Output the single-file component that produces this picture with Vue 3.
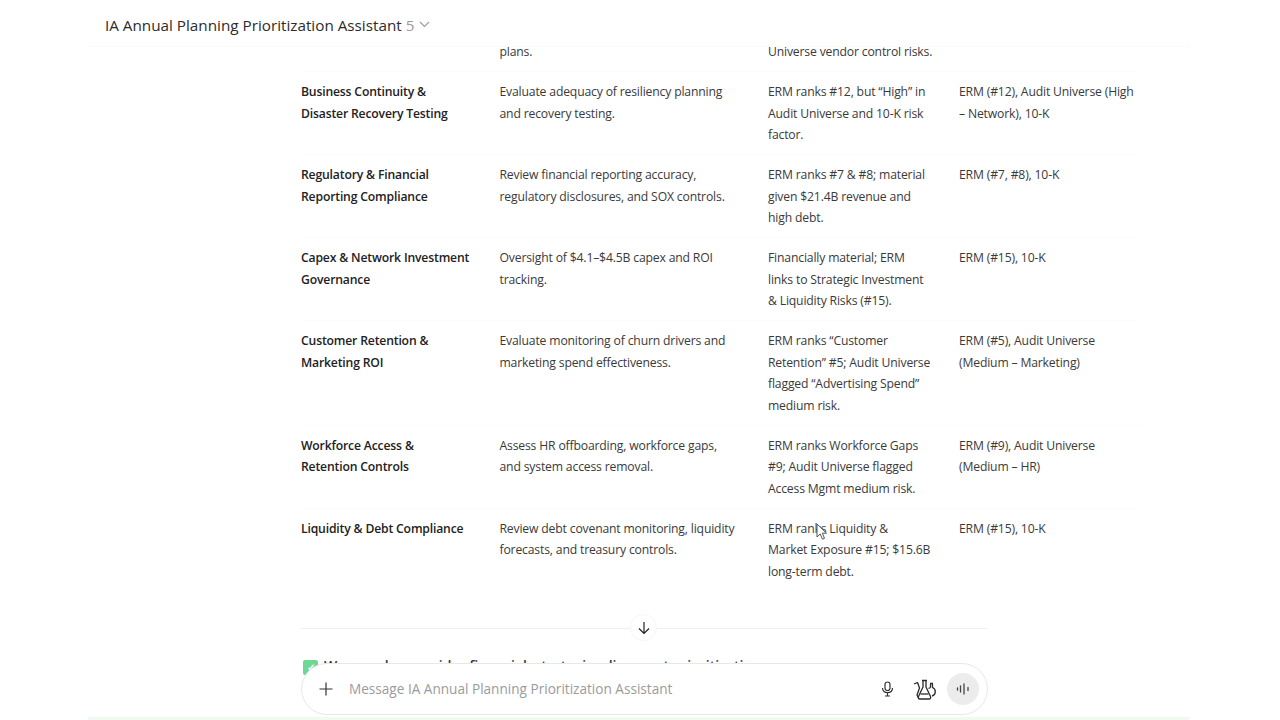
<template>
  <div class="page">
    <header class="topbar">
      <span class="title">IA Annual Planning Prioritization Assistant</span>
      <span class="version">5</span>
      <svg class="chevron" width="11" height="7" viewBox="0 0 11 7" fill="none">
        <path d="M1 1l4.5 4.500L10 1" stroke="#9a9a9a" stroke-width="1.1" />
      </svg>
    </header>

    <main class="thread">
      <table class="risk-table">
        <tbody>
          <tr v-for="row in rows" :key="row.name">
            <td class="name">{{ row.name }}</td>
            <td>{{ row.scope }}</td>
            <td>{{ row.why }}</td>
            <td>{{ row.source }}</td>
          </tr>
        </tbody>
      </table>

      <div class="rule"></div>
      <p class="next-line"><span class="check">✓</span>We can also consider financial, strategic, alignment prioritization</p>
    </main>

    <button class="scroll-down" type="button">
      <svg width="14" height="14" viewBox="0 0 14 14" fill="none">
        <path d="M7 1v11.500M2 7.500l5 5 5-5" stroke="#222" stroke-width="1.2" />
      </svg>
    </button>

    <!-- mouse cursor caught in the recording -->
    <svg class="cursor" width="12" height="18" viewBox="0 0 12 18">
      <path d="M1 1v13l3.200-3 2.300 5.200 2-.9-2.200-5.100H10.500z" fill="#fff" stroke="#555" stroke-width="1" />
    </svg>

    <div class="composer">
      <svg class="plus" width="14" height="14" viewBox="0 0 14 14" fill="none">
        <path d="M7 .5v13M.5 7h13" stroke="#333" stroke-width="1.2" />
      </svg>
      <span class="placeholder">Message IA Annual Planning Prioritization Assistant</span>
      <svg class="mic" width="13" height="16" viewBox="0 0 13 16" fill="none" stroke="#333" stroke-width="1.2">
        <rect x="4" y="1" width="5" height="8.500" rx="2.500" />
        <path d="M1.500 7c0 2.900 2.200 4.700 5 4.700s5-1.800 5-4.700M6.500 11.700V15M4 15h5" />
      </svg>
      <svg class="flasks" width="24" height="21" viewBox="0 0 24 21" fill="none" stroke="#2b2b2b" stroke-width="1.3" stroke-linejoin="round">
        <path d="M1 5l3.500-1.500L6.500 9 4 16l2 4" />
        <path d="M9 1.500h5M10 2v6L5.500 17.500C5 19 5.700 20 7 20h9c1.300 0 2-1 1.500-2.500L13 8V2" />
        <path d="M7.500 15h8" />
        <path d="M17 4.500h3M17.500 5v3.500M19.500 5v3.500a4.500 4.500 0 0 1-.5 8.500M17.500 8.500l-2 1" />
      </svg>
      <span class="voice">
        <svg width="14" height="12" viewBox="0 0 14 12" fill="none" stroke="#444" stroke-width="1.300" stroke-linecap="round">
          <path d="M1.500 5v2M4.500 3v6M8 1v10M12 4.500v3" />
        </svg>
      </span>
    </div>
    <div class="bottom-strip"></div>
  </div>
</template>

<script setup>
const rows = [
  { name: '', scope: 'plans.', why: 'Universe vendor control risks.', source: '' },
  {
    name: 'Business Continuity & Disaster Recovery Testing',
    scope: 'Evaluate adequacy of resiliency planning and recovery testing.',
    why: 'ERM ranks #12, but “High” in Audit Universe and 10-K risk factor.',
    source: 'ERM (#12), Audit Universe (High – Network), 10-K',
  },
  {
    name: 'Regulatory & Financial Reporting Compliance',
    scope: 'Review financial reporting accuracy, regulatory disclosures, and SOX controls.',
    why: 'ERM ranks #7 & #8; material given $21.4B revenue and high debt.',
    source: 'ERM (#7, #8), 10-K',
  },
  {
    name: 'Capex & Network Investment Governance',
    scope: 'Oversight of $4.1–$4.5B capex and ROI tracking.',
    why: 'Financially material; ERM links\u00a0to Strategic Investment & Liquidity Risks (#15).',
    source: 'ERM (#15), 10-K',
  },
  {
    name: 'Customer Retention & Marketing ROI',
    scope: 'Evaluate monitoring of churn drivers and marketing spend effectiveness.',
    why: 'ERM ranks “Customer Retention” #5; Audit Universe flagged “Advertising Spend” medium risk.',
    source: 'ERM (#5), Audit Universe (Medium – Marketing)',
  },
  {
    name: 'Workforce Access & Retention\u00a0Controls',
    scope: 'Assess HR offboarding, workforce gaps, and system access removal.',
    why: 'ERM ranks Workforce Gaps #9; Audit Universe flagged Access Mgmt medium risk.',
    source: 'ERM (#9), Audit Universe (Medium – HR)',
  },
  {
    name: 'Liquidity & Debt Compliance',
    scope: 'Review debt covenant monitoring, liquidity forecasts, and treasury controls.',
    why: 'ERM ranks Liquidity & Market\u00a0Exposure #15; $15.6B long-term debt.',
    source: 'ERM (#15), 10-K',
  },
]
</script>

<style>
html,
body {
  margin: 0;
  background: #fff;
}
</style>

<style scoped>
.page {
  position: relative;
  width: 1280px;
  height: 720px;
  overflow: hidden;
  background: #fff;
  color: #3a3a3a;
  font-family: "Open Sans", "Liberation Sans", sans-serif;
}

.topbar {
  display: flex;
  align-items: center;
  gap: 4px;
  height: 47px;
  margin: 0 90px 0 88px;
  padding: 3px 0 0 17px;
  box-sizing: border-box;
  border-bottom: 1px solid #fafafa;
  font-size: 15.250px;
}

.title {
  color: #2c2c2c;
}

.version {
  color: #9a9a9a;
}

.chevron {
  margin-left: 1px;
}

.thread {
  height: 673px;
  overflow: hidden;
  padding-left: 301px;
}

.risk-table {
  width: 840px;
  margin-top: -15px;
  table-layout: fixed;
  border-collapse: collapse;
  font-size: 12.200px;
  letter-spacing: -0.17px;
  line-height: 21.500px;
}

.risk-table td {
  padding: 9px 0 8.500px;
  vertical-align: top;
  border-bottom: 1px solid #fcfcfc;
}

.risk-table tr:last-child td {
  border-bottom: 0;
}

.risk-table td:nth-child(1) {
  width: 170px;
  padding-right: 28.500px;
}

.risk-table td:nth-child(2) {
  width: 240px;
  padding-right: 28.500px;
}

.risk-table td:nth-child(3) {
  width: 166px;
  padding-right: 25px;
}

.name {
  font-weight: 600;
  color: #222;
}

.rule {
  width: 686px;
  height: 1px;
  margin-top: 37px;
  background: #efefef;
}

.next-line {
  margin: 27px 0 0;
  font-size: 14px;
  font-weight: 600;
  white-space: nowrap;
}

.check {
  display: inline-block;
  width: 15px;
  height: 15px;
  margin: 0 6px 0 2px;
  border-radius: 2px;
  background: #6fd793;
  color: #fff;
  font-size: 10px;
  line-height: 15px;
  text-align: center;
}

.scroll-down {
  position: absolute;
  left: 630px;
  top: 614px;
  display: flex;
  align-items: center;
  justify-content: center;
  width: 27px;
  height: 27px;
  padding: 0;
  border: 1px solid #f6f6f6;
  border-radius: 50%;
  background: #fff;
}

.cursor {
  position: absolute;
  left: 816px;
  top: 523px;
}

.composer {
  position: absolute;
  left: 301px;
  top: 663px;
  display: flex;
  align-items: center;
  width: 687px;
  height: 52px;
  box-sizing: border-box;
  padding: 0 8px 0 17px;
  border: 1px solid #e8e8e8;
  border-radius: 26px;
  background: #fff;
}

.placeholder {
  flex: 1;
  margin: 0 0 1px 16px;
  color: #9b9b9b;
  font-size: 13.600px;
}

.mic {
  margin-right: 19px;
}

.flasks {
  margin-right: 10px;
}

.voice {
  display: flex;
  align-items: center;
  justify-content: center;
  width: 32px;
  height: 32px;
  border-radius: 50%;
  background: #ececec;
}

.bottom-strip {
  position: absolute;
  left: 88px;
  right: 90px;
  bottom: 0;
  height: 3px;
  background: #f0fbf0;
}
</style>
